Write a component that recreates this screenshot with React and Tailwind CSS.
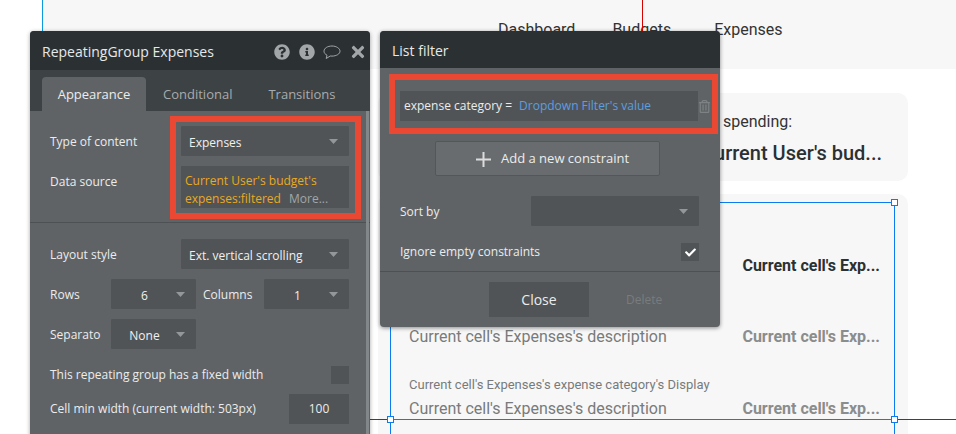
import { FaQuestionCircle, FaInfoCircle, FaTimes, FaRegTrashAlt, FaCheck } from "react-icons/fa";

const Caret = () => (
  <svg width="9" height="5" viewBox="0 0 9 5" className="shrink-0">
    <path d="M0 0h9L4.5 5z" fill="#94979a" />
  </svg>
);

const Select = ({ value, className, center }) => (
  <div className={`h-[30px] flex items-center justify-between pl-2 pr-[11px] bg-[#505456] rounded-[1px] text-[#f0f0f0] ${className}`}>
    <span className={`pt-[3px] ${center ? "flex-1 text-center pr-[6px]" : ""}`}>{value}</span>
    <Caret />
  </div>
);

const Handle = ({ className }) => (
  <div className={`absolute w-[7px] h-[7px] bg-white border border-[#0a7cf0] ${className}`} />
);

const PageRow = ({ dark, label, desc }) => (
  <div className="h-[71.5px] flex items-end justify-between pl-[31px] pr-[28px] font-['Roboto',sans-serif] text-[#777b7b]">
    <div>
      {label && <div className="text-[13px] leading-[16px] mb-[6px]">Current cell's Expenses's expense category's Display</div>}
      {desc && <div className="text-[16px] leading-[20px]">Current cell's Expenses's description</div>}
    </div>
    <div className={`text-[16px] leading-[20px] font-bold ${dark ? "text-[#2b3133]" : "text-[#8a8d8d]"}`}>Current cell's Exp...</div>
  </div>
);

const App = () => {
  return (
    <div className="relative w-[956px] h-[434px] overflow-hidden bg-white font-['Roboto',sans-serif]">
      {/* page under the editor */}
      <div className="ml-[43px] h-[69px] pl-[455px] pt-[20px] bg-[#f7f7f7] flex gap-[37px] text-[16px] leading-[20px] text-[#333]">
        <span>Dashboard</span>
        <span>Budgets</span>
        <span className="ml-[6px]">Expenses</span>
      </div>
      <div className="ml-[378px] w-[530px] mt-[24px] h-[88px] rounded-[10px] bg-[#f7f7f7] relative">
        <div className="pl-[345px] pt-[19px] text-[16px] leading-[20px] text-[#333]">spending:</div>
        <div className="pr-[26px] mt-[9px] text-right text-[20px] leading-[24px] font-medium text-[#2b3133]">Current User's bud...</div>
      </div>
      <div className="ml-[378px] w-[530px] mt-[13px] h-[260px] pt-[10px] rounded-[10px] bg-[#f7f7f7]">
        <PageRow dark />
        <PageRow desc />
        <PageRow label desc />
      </div>

      {/* selection guides */}
      <div className="absolute left-[42px] top-0 w-px h-[31px] bg-[#0a9be0]" />
      <div className="absolute left-[642px] top-0 w-px h-[31px] bg-[#d90000]" />
      <div className="absolute left-[370px] top-[419px] w-[20px] h-px bg-[#d90000]" />
      <div className="absolute left-[894px] top-[419px] w-[62px] h-px bg-[#d90000]" />
      <div className="absolute left-[390px] top-[202px] w-[505px] h-[232px] border-l border-r border-t border-[#0a7cf0]" />
      <div className="absolute left-[390px] top-[419px] w-[504px] h-px bg-[#0a7cf0]" />
      <Handle className="left-[891px] top-[199px]" />
      <Handle className="left-[891px] top-[416px]" />
      <Handle className="left-[387px] top-[416px]" />

      {/* property editor */}
      <div className="absolute left-[30px] top-[31px] w-[340px] h-[420px] rounded-t-[4px] bg-[#5f6366] shadow-[0_1px_4px_rgba(0,0,0,0.35)] font-['Open_Sans',sans-serif] text-[12px] text-[#ececec] overflow-hidden">
        <div className="h-[39px] pl-3 pr-[3px] pt-[2px] flex items-center justify-between bg-[#2b3133]">
          <span className="text-[14px] text-[#e8e8e8]">RepeatingGroup Expenses</span>
          <div className="flex items-center text-[#a2a6a8]">
            <FaQuestionCircle size={16} />
            <FaInfoCircle size={16} className="ml-[9px]" />
            <svg width="18" height="15" viewBox="0 0 18 15" className="ml-[8px] mt-[2px]" fill="none" stroke="#a2a6a8" strokeWidth="1">
              <path d="M9 1C4.6 1 1 3.2 1 6.2c0 1.7 1.2 3.100 3 4l-.8 3.300 4-2.500c.6.100 1.200.100 1.800.100 4.400 0 8-2.200 8-4.900S13.400 1 9 1z" />
            </svg>
            <FaTimes size={18} className="ml-[8px]" />
          </div>
        </div>
        <div className="h-[41px] pl-3 flex items-end bg-[#3d4244] text-[13px]">
          <div className="w-[104px] h-[34px] pt-px flex items-center justify-center rounded-t-[4px] bg-[#5f6366] text-[#ececec]">Appearance</div>
          <div className="ml-[17px] h-[34px] pt-px flex items-center text-[#a8abad]">Conditional</div>
          <div className="ml-[36px] h-[34px] pt-px flex items-center text-[#a8abad]">Transitions</div>
        </div>
        <div className="relative">
          <div className="absolute right-[1px] top-0 w-[3px] h-[400px] bg-[#82878a]" />
          <div className="h-[112px] border-b border-[#4d5153] pl-5 pr-[21px] flex">
            <div className="w-[120px] pt-[21px] leading-[20px]">
              <div>Type of content</div>
              <div className="mt-[20px]">Data source</div>
            </div>
            <div className="ml-[11px] flex-1 pt-[15px]">
              <Select value="Expenses" />
              <div className="mt-[10px] h-[42px] pl-1 pt-[6px] bg-[#505456] leading-[18px] text-[#e9a920]">
                Current User's budget's
                <br />
                expenses:filtered <span className="ml-[5px] text-[#a3a6a8]">More...</span>
              </div>
            </div>
          </div>
          <div className="pl-5 pr-[21px] pt-[16px]">
            <div className="flex items-center justify-between">
              <span className="pt-[2px]">Layout style</span>
              <Select value="Ext. vertical scrolling" className="w-[168px]" />
            </div>
            <div className="mt-[10px] flex items-center">
              <span className="pt-[2px] w-[61px]">Rows</span>
              <Select value="6" center className="w-[85px]" />
              <span className="pt-[2px] ml-[7px] w-[61px]">Columns</span>
              <Select value="1" center className="w-[85px]" />
            </div>
            <div className="mt-[10px] flex items-center">
              <span className="pt-[2px] w-[61px]">Separato</span>
              <Select value="None" center className="w-[85px]" />
            </div>
            <div className="mt-[17px] flex items-center justify-between">
              <span>This repeating group has a fixed width</span>
              <div className="w-[18px] h-[18px] bg-[#505456]" />
            </div>
            <div className="mt-[10px] flex items-center justify-between">
              <span>Cell min width (current width: 503px)</span>
              <div className="w-[60px] h-[30px] flex items-center justify-center bg-[#505456]">100</div>
            </div>
          </div>
          {/* red highlight */}
          <div className="absolute left-[140px] top-[5px] w-[191px] h-[103px] border-[6px] border-[#ea4833]" />
        </div>
      </div>

      {/* list filter */}
      <div className="absolute left-[380px] top-[31px] w-[340px] h-[296px] rounded-[4px] bg-[#5f6366] shadow-[0_1px_4px_rgba(0,0,0,0.45)] font-['Open_Sans',sans-serif] text-[12px] text-[#ececec]">
        <div className="h-[37px] px-3 pt-[2px] flex items-center rounded-t-[4px] bg-[#2b3133] text-[14px] text-[#e8e8e8]">List filter</div>
        <div className="relative h-[84px] pt-[23px] pl-5 pr-[22px]">
          <div className="h-[30px] flex items-center pl-1 bg-[#505456]">
            expense category =<span className="ml-[7px] text-[#5c9ee0]">Dropdown Filter's value</span>
          </div>
          <FaRegTrashAlt size={13} className="absolute left-[318px] top-[32px] text-[#7e8284]" />
          <div className="absolute left-[9px] top-[6px] w-[329px] h-[60px] border-[6px] border-[#ea4833]" />
        </div>
        <div className="ml-[55px] w-[225px] -mt-[11px] h-[35px] pl-[40px] pt-px flex items-center gap-[10px] border border-[#53575a] rounded-[2px] bg-[#686c6f] text-[13px]">
          <svg width="15" height="15" viewBox="0 0 15 15" fill="#dcdcdc">
            <path d="M6.500 0h2v6.500H15v2H8.500V15h-2V8.500H0v-2h6.500z" />
          </svg>
          <span>Add a new constraint</span>
        </div>
        <div className="mt-[20px] pl-5 pr-[21px] flex items-center justify-between">
          <span className="pt-[2px]">Sort by</span>
          <Select value="" className="w-[168px]" />
        </div>
        <div className="mt-[17px] pl-5 pr-[21px] h-[18px] flex items-center justify-between">
          <span>Ignore empty constraints</span>
          <div className="w-[18px] h-[18px] flex items-center justify-center bg-[#505456]">
            <FaCheck size={11} className="text-white" />
          </div>
        </div>
        <div className="mt-[10px] h-[56px] pt-[10px] pl-[109px] flex border-t border-[#4d5153]">
          <div className="w-[100px] h-[35px] flex items-center justify-center bg-[#505456] text-[14px]">Close</div>
          <div className="ml-[37px] h-[35px] flex items-center text-[12px] text-[#787c7e]">Delete</div>
        </div>
      </div>
    </div>
  );
};

export default App;
